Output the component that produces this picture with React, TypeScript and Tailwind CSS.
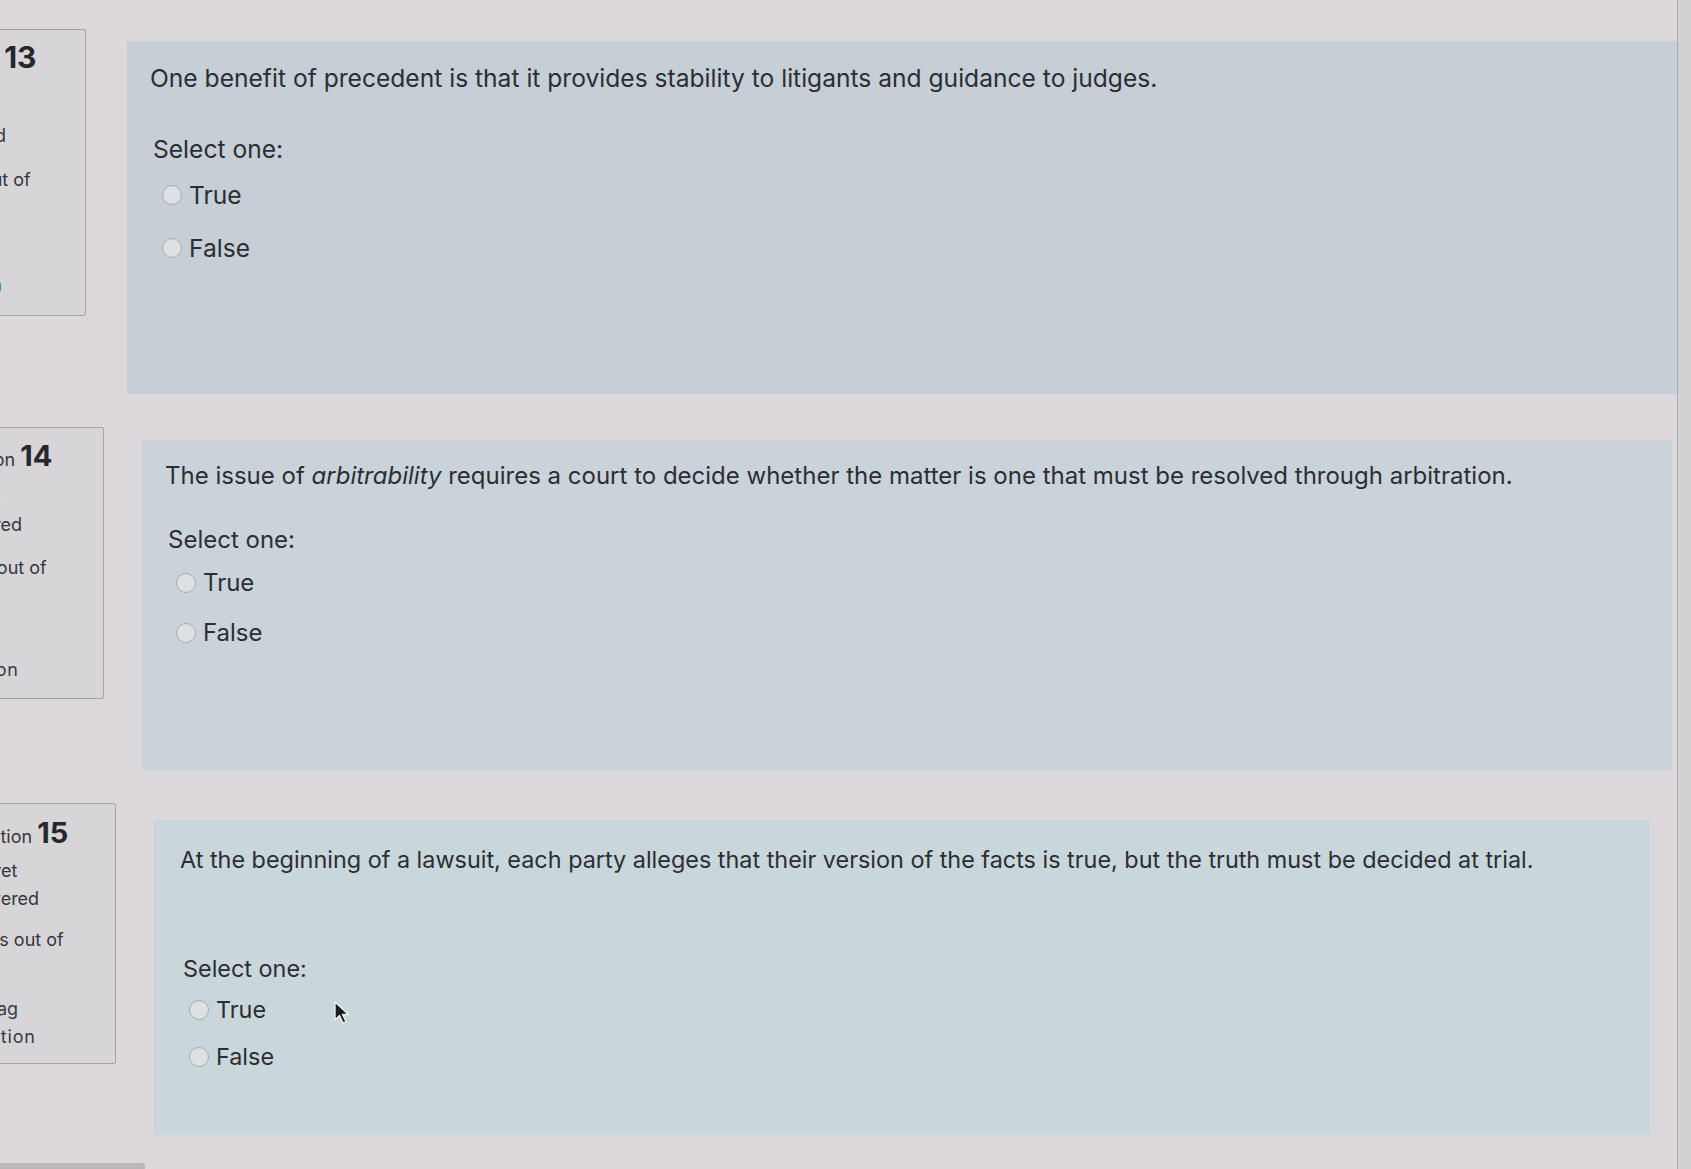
import React from "react";

type Q = {
  num: string;
  text: React.ReactNode;
  rowCls: string;
  boxCls: string;
  numCls: string;
  infoCls: string;
  panelCls: string;
  qCls: string;
  selCls: string;
  optsCls: string;
  optCls: string;
};

function Radio({ label, cls }: { label: string; cls: string }) {
  return (
    <label className={"flex items-center " + cls}>
      <span className="w-[20px] h-[20px] rounded-full border-[1.5px] border-[#a6abb0] bg-[#dde1e4] mr-[7px] shrink-0" />
      <span>{label}</span>
    </label>
  );
}

function Question(q: Q) {
  return (
    <div className={"flex items-start " + q.rowCls}>
      <div className={"shrink-0 border border-[#a3a4a8] bg-[#d8d5d8] rounded-[2px] " + q.boxCls}>
        <h3 className={"flex items-baseline text-[#34373d] " + q.infoCls}>
          <span>Question&nbsp;</span>
          <span className={"font-bold text-[#25282d] " + q.numCls}>{q.num}</span>
        </h3>
        <div className={"text-[#34373d] " + q.infoCls}>
          <div>Not yet</div>
          <div>answered</div>
        </div>
        <div className={"text-[#34373d] " + q.infoCls}>
          <div>Marks out of</div>
          <div>1.00</div>
        </div>
        <div className={"text-[#363b48] " + q.infoCls}>
          <div className="flex items-center">
            <svg width="16" height="16" viewBox="0 0 16 16" className="mr-[10px] shrink-0">
              <path d="M3 1 V15 M3 2 H12 L10 5 L12 8 H3" fill="none" stroke="#777" strokeWidth="1.4" />
            </svg>
            <span>Flag</span>
          </div>
          <div className="tracking-[0.8px]">question</div>
        </div>
      </div>
      <div className={"flex-none " + q.panelCls}>
        <p className={"text-[#2b2e34] " + q.qCls}>{q.text}</p>
        <div className={"text-[#2b2e34] " + q.selCls}>Select one:</div>
        <div className={"flex flex-col text-[#2b2e34] " + q.optsCls}>
          <Radio label="True" cls={q.optCls} />
          <Radio label="False" cls={q.optCls} />
        </div>
      </div>
    </div>
  );
}

export default function App() {
  return (
    <div
      className="relative w-[1691px] h-[1169px] overflow-hidden bg-[#dcd8db] flex"
      style={{ fontFamily: "Inter, 'Noto Sans', sans-serif" }}
    >
      <div className="flex-1 flex flex-col pt-[29px]">
        <Question
          num="13"
          text="One benefit of precedent is that it provides stability to litigants and guidance to judges."
          rowCls="h-[365px] mb-[33px]"
          boxCls="w-[170px] -ml-[84px] h-[287px] pl-[6px] pt-[10px]"
          numCls="text-[30px] leading-[34px]"
          infoCls="text-[18px] leading-[30px] [&:nth-child(2)]:mt-[14px] [&:nth-child(3)]:mt-[14px] [&:nth-child(4)]:mt-[15px]"
          panelCls="mt-[12px] ml-[41px] w-[1550px] h-[353px] bg-[#c6ced6] pl-[23px] pt-[21px]"
          qCls="text-[24.6px] leading-[32px]"
          selCls="text-[24.6px] leading-[32px] mt-[39px] ml-[3px]"
          optsCls="mt-[14px] ml-[12px] gap-[21px]"
          optCls="text-[24.6px] leading-[32px]"
        />
        <Question
          num="14"
          text={
            <>
              The issue of <em>arbitrability</em> requires a court to decide whether the matter is one that must be resolved through arbitration.
            </>
          }
          rowCls="h-[343px] mb-[33px]"
          boxCls="w-[172px] -ml-[68px] h-[272px] pl-[6px] pt-[11px]"
          numCls="text-[29px] leading-[34px]"
          infoCls="text-[18px] leading-[28px] [&:nth-child(2)]:mt-[9px] [&:nth-child(3)]:mt-[15px] [&:nth-child(4)]:mt-[18px]"
          panelCls="mt-[13px] ml-[38px] w-[1530px] h-[330px] bg-[#cad3d9] pl-[23px] pt-[21px]"
          qCls="text-[24px] leading-[30px]"
          selCls="text-[24px] leading-[30px] mt-[34px] ml-[3px]"
          optsCls="mt-[13px] ml-[11px] gap-[20px]"
          optCls="text-[24px] leading-[30px]"
        />
        <Question
          num="15"
          text="At the beginning of a lawsuit, each party alleges that their version of the facts is true, but the truth must be decided at trial."
          rowCls="h-[332px]"
          boxCls="w-[167px] -ml-[51px] h-[261px] pl-[6px] pt-[12px]"
          numCls="text-[29px] leading-[34px]"
          infoCls="text-[18px] leading-[28px] [&:nth-child(2)]:mt-[6px] [&:nth-child(3)]:mt-[13px] [&:nth-child(4)]:mt-[13px]"
          panelCls="mt-[17px] ml-[38px] w-[1496px] h-[315px] bg-[#c9d7db] pl-[26px] pt-[25px]"
          qCls="text-[23.4px] leading-[30px]"
          selCls="text-[23.4px] leading-[30px] mt-[79px] ml-[3px]"
          optsCls="mt-[11px] ml-[9px] gap-[17px]"
          optCls="text-[23.4px] leading-[30px]"
        />
        <div className="mt-[28px] w-[145px] h-[8px] bg-[#b8b7ba] rounded-tr-[3px]" />
      </div>
      <div className="w-[16px] border-l border-[#a9a9ad] bg-[#d2d0d3]" />
      <svg
        className="absolute left-[333px] top-[1000px]"
        width="18"
        height="26"
        viewBox="0 0 18 26"
      >
        <path
          d="M2 2 L2 20 L6.5 15.5 L10 23 L13 21.5 L9.5 14.5 L15.5 14.5 Z"
          fill="#1c1d20"
          stroke="#f2f2f2"
          strokeWidth="1.3"
          strokeLinejoin="round"
        />
      </svg>
    </div>
  );
}
